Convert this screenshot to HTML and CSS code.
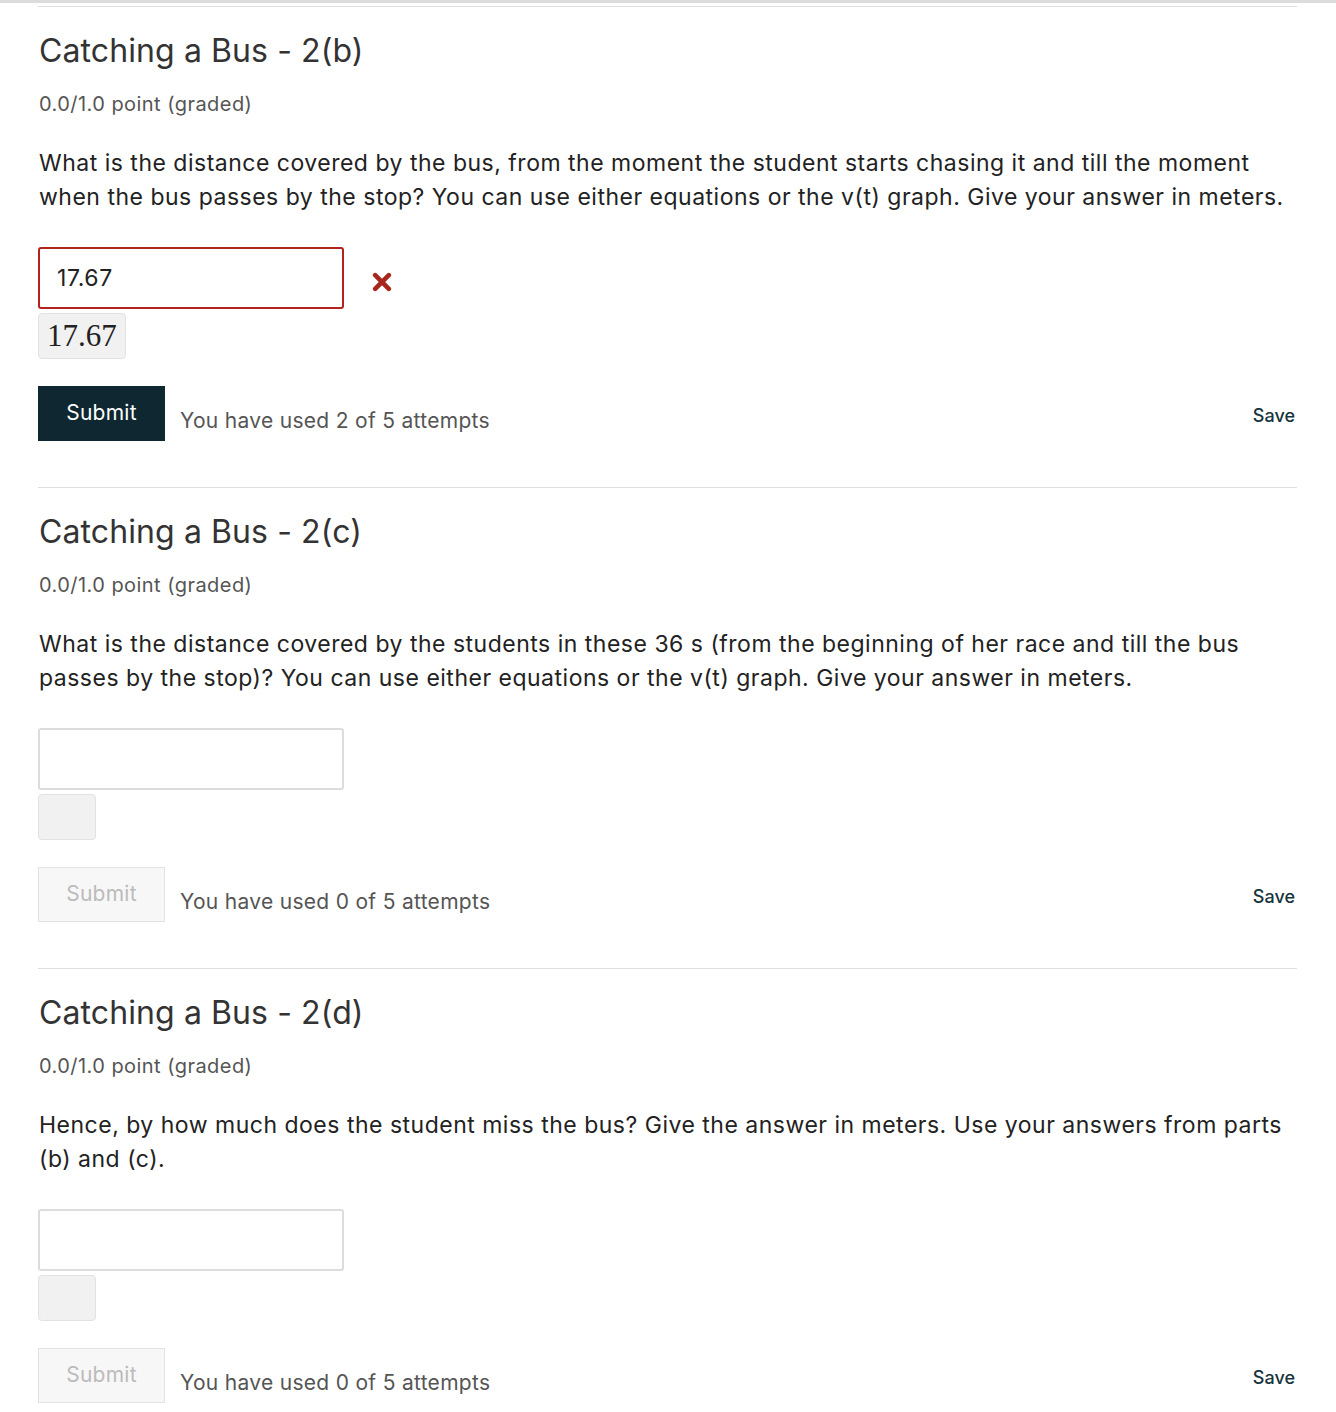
FILE: index.html
```html
<!DOCTYPE html>
<html>
<head>
<meta charset="utf-8">
<link rel="stylesheet" href="styles.css">
</head>
<body>
<div class="topbar"></div>
<main class="page">
  <section class="problem">
    <h2 class="title">Catching a Bus - 2(b)</h2>
    <div class="points">0.0/1.0 point (graded)</div>
    <p class="question">What is the distance covered by the bus, from the moment the student starts chasing it and till the moment when the bus passes by the stop? You can use either equations or the v(t) graph. Give your answer in meters.</p>
    <div class="answer-row">
      <div class="input incorrect">17.67</div>
      <svg class="xmark" width="20" height="20" viewBox="0 0 20 20"><path d="M3.2 3.2 L16.8 16.8 M16.8 3.2 L3.2 16.8" stroke="#a8261b" stroke-width="4.6" stroke-linecap="round"/></svg>
    </div>
    <div class="preview"><span class="math">17.67</span></div>
    <div class="actions">
      <button class="submit">Submit</button>
      <span class="attempts">You have used 2 of 5 attempts</span>
      <span class="save">Save</span>
    </div>
  </section>
  <section class="problem">
    <h2 class="title">Catching a Bus - 2(c)</h2>
    <div class="points">0.0/1.0 point (graded)</div>
    <p class="question">What is the distance covered by the students in these 36 s (from the beginning of her race and till the bus passes by the stop)? You can use either equations or the v(t) graph. Give your answer in meters.</p>
    <div class="answer-row">
      <div class="input"></div>
    </div>
    <div class="preview empty"></div>
    <div class="actions">
      <button class="submit disabled">Submit</button>
      <span class="attempts">You have used 0 of 5 attempts</span>
      <span class="save">Save</span>
    </div>
  </section>
  <section class="problem last">
    <h2 class="title">Catching a Bus - 2(d)</h2>
    <div class="points">0.0/1.0 point (graded)</div>
    <p class="question">Hence, by how much does the student miss the bus? Give the answer in meters. Use your answers from parts (b) and (c).</p>
    <div class="answer-row">
      <div class="input"></div>
    </div>
    <div class="preview empty"></div>
    <div class="actions">
      <button class="submit disabled">Submit</button>
      <span class="attempts">You have used 0 of 5 attempts</span>
      <span class="save">Save</span>
    </div>
  </section>
</main>
</body>
</html>
```
FILE: styles.css
```css
html, body {
  margin: 0;
  padding: 0;
  background: #fff;
}
body {
  font-family: Inter, "Noto Sans", sans-serif;
  color: #222;
}
.topbar {
  height: 3px;
  background: #dcdcdc;
}
.page {
  width: 1259px;
  margin-left: 38px;
  padding-top: 3px;
}
.problem {
  border-top: 1px solid #dedede;
  padding-top: 25px;
  padding-bottom: 46px;
}
.problem.last {
  padding-bottom: 0;
}
.title {
  margin: 0;
  font-size: 32px;
  line-height: 38px;
  font-weight: 400;
  color: #333;
  padding-left: 1px;
  letter-spacing: 0.1px;
}
.points {
  margin-top: 22px;
  font-size: 20px;
  line-height: 24px;
  color: #555;
  padding-left: 1px;
  letter-spacing: 0.45px;
}
.question {
  margin: 30px 0 0;
  font-size: 23px;
  line-height: 34px;
  color: #222;
  padding-left: 1px;
  letter-spacing: 0.5px;
}
.answer-row {
  margin-top: 33px;
  display: flex;
  align-items: center;
  gap: 28px;
}
.input {
  box-sizing: border-box;
  width: 306px;
  height: 62px;
  border: 2px solid #dcdcdc;
  border-radius: 3px;
  padding: 0 17px;
  font-size: 23px;
  line-height: 58px;
  color: #222;
  letter-spacing: 0.6px;
}
.input.incorrect {
  border-color: #b1231c;
}
.xmark {
  display: block;
  margin-top: 8px;
}
.preview {
  box-sizing: border-box;
  margin-top: 4px;
  display: inline-block;
  height: 46px;
  min-width: 58px;
  padding: 0 8px;
  background: #f1f1f1;
  border: 1px solid #e2e2e2;
  border-radius: 4px;
  vertical-align: top;
}
.math {
  font-family: "Liberation Serif", "DejaVu Serif", serif;
  font-size: 31px;
  line-height: 44px;
  color: #222;
}
.actions {
  margin-top: 27px;
  display: flex;
  align-items: center;
}
.submit {
  box-sizing: border-box;
  width: 127px;
  height: 55px;
  border: 1px solid #0e2730;
  background: #0e2730;
  color: #fff;
  font-family: Inter, "Noto Sans", sans-serif;
  font-size: 21px;
  letter-spacing: 0.25px;
  padding: 0 0 2px;
  border-radius: 0;
}
.submit.disabled {
  background: #f7f7f7;
  border-color: #e3e3e3;
  color: #bbb;
}
.attempts {
  margin-left: 15px;
  margin-top: 14px;
  font-size: 21px;
  color: #555;
  letter-spacing: 0.3px;
}
.save {
  margin-left: auto;
  margin-right: 2px;
  margin-top: 4px;
  font-size: 18px;
  color: #16343c;
  font-weight: 500;
}
```
